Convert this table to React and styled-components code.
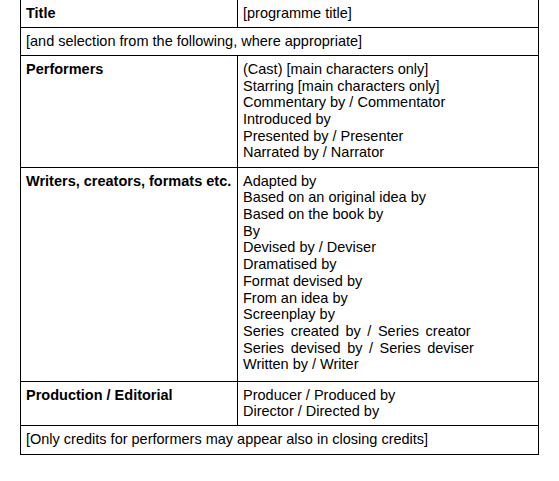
import React from "react";
import styled, { createGlobalStyle } from "styled-components";

const Global = createGlobalStyle`
  html, body { margin: 0; padding: 0; background: #ffffff; }
  body { font-family: "Liberation Sans", Arial, sans-serif; color: #000; }
`;

const Page = styled.div`
  padding-left: 20px;
  margin-top: -1px;
`;

const Table = styled.table`
  border-collapse: collapse;
  width: 518px;
  table-layout: fixed;
  font-size: 14.5px;
  line-height: 16.7px;
`;

const Col = styled.col`
  width: ${(p) => p.$w}px;
`;

const Cell = styled.td`
  border: 1px solid #000;
  padding: 5px 5px ${(p) => p.$pb ?? 5}px 5px;
  vertical-align: top;
  font-weight: ${(p) => (p.$bold ? 700 : 400)};
  white-space: nowrap;
`;

const Line = styled.div`
  word-spacing: ${(p) => (p.$spacing ? p.$spacing : "normal")};
`;

const rows = [
  { label: "Performers", pb: 5.5, items: [
    "(Cast) [main characters only]",
    "Starring [main characters only]",
    "Commentary by / Commentator",
    "Introduced by",
    "Presented by / Presenter",
    "Narrated by / Narrator",
  ]},
  { label: "Writers, creators, formats etc.", pb: 7.5, items: [
    "Adapted by",
    "Based on an original idea by",
    "Based on the book by",
    "By",
    "Devised by / Deviser",
    "Dramatised by",
    "Format devised by",
    "From an idea by",
    "Screenplay by",
    ["Series created by / Series creator", "2.5px"],
    ["Series devised by / Series deviser", "2.5px"],
    "Written by / Writer",
  ]},
  { label: "Production / Editorial", pb: 5, items: [
    "Producer / Produced by",
    "Director / Directed by",
  ]},
];

export default function App() {
  return (
    <Page>
      <Global />
      <Table>
        <colgroup>
          <Col $w={217} />
          <Col $w={301} />
        </colgroup>
        <tbody>
          <tr>
            <Cell $bold $pb={5.5}>Title</Cell>
            <Cell $pb={5.5}>[programme title]</Cell>
          </tr>
          <tr>
            <Cell colSpan={2}>[and selection from the following, where appropriate]</Cell>
          </tr>
          {rows.map((r) => (
            <tr key={r.label}>
              <Cell $bold $pb={r.pb}>{r.label}</Cell>
              <Cell $pb={r.pb}>
                {r.items.map((it) => {
                  const [text, sp] = Array.isArray(it) ? it : [it, null];
                  return <Line key={text} $spacing={sp}>{text}</Line>;
                })}
              </Cell>
            </tr>
          ))}
          <tr>
            <Cell colSpan={2} $pb={6}>[Only credits for performers may appear also in closing credits]</Cell>
          </tr>
        </tbody>
      </Table>
    </Page>
  );
}
